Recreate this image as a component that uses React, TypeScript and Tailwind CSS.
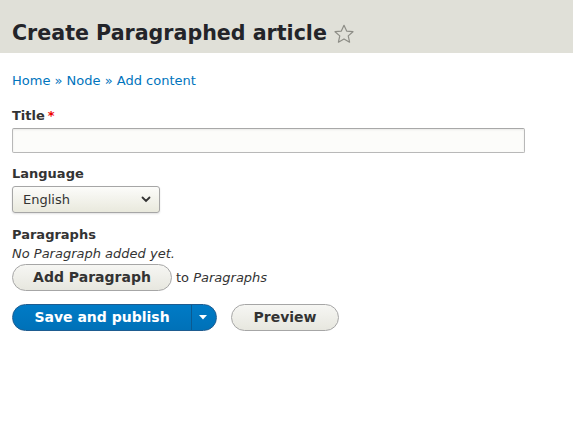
import React from 'react';

const font = { fontFamily: '"DejaVu Sans", Verdana, sans-serif' };

function Star() {
  return (
    <svg width="22" height="22" viewBox="0 0 24 24" className="ml-[6px] mt-[2px]">
      <path
        d="M12 2.5l2.9 6.3 6.9.7-5.2 4.6 1.5 6.8L12 17.4l-6.1 3.5 1.5-6.8-5.2-4.6 6.9-.7z"
        fill="none"
        stroke="#8d8d86"
        strokeWidth="1.3"
        strokeLinejoin="round"
      />
    </svg>
  );
}

function Chevron({ color = '#333' }: { color?: string }) {
  return (
    <svg width="10" height="7" viewBox="0 0 10 7">
      <path d="M1.5 1.5L5 5l3.5-3.5" fill="none" stroke={color} strokeWidth="1.8" strokeLinecap="round" />
    </svg>
  );
}

export default function App() {
  return (
    <div className="min-h-screen bg-white text-[#333] text-[13px]" style={font}>
      {/* Page header */}
      <div className="h-[53px] bg-[#e0e0d8] px-3 pt-[17px]">
        <h1 className="flex items-center text-[20.6px] leading-[32px] font-bold text-[#232429]">
          Create Paragraphed article
          <Star />
        </h1>
      </div>

      <div className="px-3">
        {/* Breadcrumb */}
        <div className="mt-[20px] leading-[16px] text-[#0074bd]">
          <a href="#" className="text-[#0074bd]">Home</a>
          <span> » </span>
          <a href="#" className="text-[#0074bd]">Node</a>
          <span> » </span>
          <a href="#" className="text-[#0074bd]">Add content</a>
        </div>

        {/* Title */}
        <label className="mt-[18px] block font-bold leading-[18px]">
          Title
          <span className="ml-[3px] text-[#e00]">*</span>
        </label>
        <input
          type="text"
          className="mt-[3px] block h-[25px] w-[513px] rounded-[2px] border border-[#b8b8b8] border-t-[#a8a8a8] bg-[#fcfcfa] px-2 shadow-[inset_0_1px_2px_rgba(0,0,0,0.08)] outline-none"
        />

        {/* Language */}
        <label className="mt-[12px] block font-bold leading-[18px]">Language</label>
        <div className="mt-[3px] flex h-[27px] w-[148px] items-center justify-between rounded-[3px] border border-[#a6a6a6] bg-gradient-to-b from-[#fcfcfa] to-[#e9e9dd] pl-[10px] pr-[8px] shadow-[0_1px_2px_rgba(0,0,0,0.12)]">
          <span>English</span>
          <Chevron />
        </div>

        {/* Paragraphs */}
        <div className="mt-[13px] font-bold leading-[18px]">Paragraphs</div>
        <div className="italic leading-[19px]">No Paragraph added yet.</div>
        <div className="mt-[1px] flex items-center">
          <button
            type="button"
            className="h-[27px] w-[160px] rounded-full border border-[#a6a6a6] bg-gradient-to-b from-[#f6f6f3] to-[#e7e7df] text-[14px] font-bold text-[#333]"
          >
            Add Paragraph
          </button>
          <span className="ml-[4px]">
            to <em>Paragraphs</em>
          </span>
        </div>

        {/* Actions */}
        <div className="mt-[13px] flex items-center gap-[14px]">
          <div className="flex h-[27px] w-[205px] overflow-hidden rounded-full border border-[#1e5c90] bg-gradient-to-b from-[#007bc6] to-[#0071b8] text-white">
            <button type="button" className="w-[178px] text-[14px] font-bold">
              Save and publish
            </button>
            <div className="w-[1px] bg-[#0b5a91]" />
            <button type="button" className="flex flex-1 items-center justify-center pr-[2px]">
              <svg width="8" height="5" viewBox="0 0 8 5">
                <path d="M0 0h8L4 4.5z" fill="#fff" />
              </svg>
            </button>
          </div>
          <button
            type="button"
            className="h-[27px] w-[108px] rounded-full border border-[#a6a6a6] bg-gradient-to-b from-[#f6f6f3] to-[#e7e7df] text-[14px] font-bold text-[#333]"
          >
            Preview
          </button>
        </div>
      </div>
    </div>
  );
}
